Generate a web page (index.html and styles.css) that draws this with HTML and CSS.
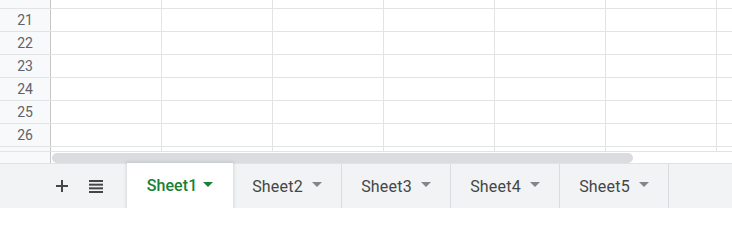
FILE: index.html
```html
<!DOCTYPE html>
<html>
<head>
<meta charset="utf-8">
<link rel="stylesheet" href="styles.css">
</head>
<body>
<div class="sheet">
  <div class="grid">
    <div class="row row-top"><div class="rh"></div><div class="c"></div><div class="c"></div><div class="c"></div><div class="c"></div><div class="c"></div><div class="c"></div><div class="c"></div></div>
    <div class="row"><div class="rh">21</div><div class="c"></div><div class="c"></div><div class="c"></div><div class="c"></div><div class="c"></div><div class="c"></div><div class="c"></div></div>
    <div class="row"><div class="rh">22</div><div class="c"></div><div class="c"></div><div class="c"></div><div class="c"></div><div class="c"></div><div class="c"></div><div class="c"></div></div>
    <div class="row"><div class="rh">23</div><div class="c"></div><div class="c"></div><div class="c"></div><div class="c"></div><div class="c"></div><div class="c"></div><div class="c"></div></div>
    <div class="row"><div class="rh">24</div><div class="c"></div><div class="c"></div><div class="c"></div><div class="c"></div><div class="c"></div><div class="c"></div><div class="c"></div></div>
    <div class="row"><div class="rh">25</div><div class="c"></div><div class="c"></div><div class="c"></div><div class="c"></div><div class="c"></div><div class="c"></div><div class="c"></div></div>
    <div class="row"><div class="rh">26</div><div class="c"></div><div class="c"></div><div class="c"></div><div class="c"></div><div class="c"></div><div class="c"></div><div class="c"></div></div>
    <div class="row row-bottom"><div class="rh"></div><div class="c"></div><div class="c"></div><div class="c"></div><div class="c"></div><div class="c"></div><div class="c"></div><div class="c"></div></div>
  </div>
  <div class="scroll">
    <div class="scroll-corner"></div>
    <div class="scroll-track"><div class="thumb"></div></div>
  </div>
  <div class="tabbar">
    <div class="tools">
      <div class="btn" title="Add sheet">
        <svg width="12" height="12" viewBox="0 0 12 12"><path d="M6 0v12M0 6h12" stroke="#444746" stroke-width="2" fill="none"/></svg>
      </div>
      <div class="btn" title="All sheets">
        <svg width="14" height="13" viewBox="0 0 14 13"><rect x="0" y="0" width="14" height="2" fill="#444746"/><rect x="0" y="3.67" width="14" height="2" fill="#444746"/><rect x="0" y="7.33" width="14" height="2" fill="#444746"/><rect x="0" y="11" width="14" height="2" fill="#444746"/></svg>
      </div>
    </div>
    <div class="tab active"><span class="label">Sheet1</span><span class="caret"></span></div>
    <div class="tab"><span class="label">Sheet2</span><span class="caret"></span></div>
    <div class="tab"><span class="label">Sheet3</span><span class="caret"></span></div>
    <div class="tab"><span class="label">Sheet4</span><span class="caret"></span></div>
    <div class="tab"><span class="label">Sheet5</span><span class="caret"></span></div>
  </div>
</div>
</body>
</html>
```

FILE: styles.css
```css
* { box-sizing: border-box; }
html, body { margin: 0; padding: 0; background: #fff; }
body { width: 732px; height: 208px; overflow: hidden; font-family: Roboto, "Noto Sans", Arial, sans-serif; }

.sheet { width: 732px; height: 208px; display: flex; flex-direction: column; overflow: hidden; }

.grid { display: flex; flex-direction: column; }
.row { display: flex; height: 23px; border-bottom: 1px solid #e2e3e3; flex: none; overflow: hidden; }
.row-top { height: 9px; }
.row-bottom { height: 5px; }
.rh {
  flex: none; width: 51px; background: #f8f9fa; border-right: 1px solid #c4c7c5;
  font-size: 14px; color: #5f6368; display: flex; align-items: center; justify-content: center;
}
.c { flex: none; width: 111px; border-right: 1px solid #e2e3e3; }

.scroll { display: flex; height: 11px; flex: none; }
.scroll-corner { width: 51px; background: #f8f9fa; border-right: 1px solid #c4c7c5; flex: none; }
.scroll-track { flex: 1; padding: 1px 0 0 1px; }
.thumb { width: 581px; height: 10px; border-radius: 5px; background: #dadce0; }

.tabbar { flex: 1; display: flex; background: #f1f3f4; border-top: 1px solid #e1e3e1; }
.tools { width: 127px; flex: none; display: flex; align-items: center; padding-left: 50px; gap: 10px; }
.btn { width: 24px; height: 24px; display: flex; align-items: center; justify-content: center; }

.tab {
  flex: none; width: 109px; border-right: 1px solid #dadce0;
  display: flex; align-items: center; justify-content: center; gap: 9px;
  font-size: 16px; letter-spacing: 0.2px; color: #444746;
}
.tab.active {
  width: 106px; background: #fff; border-right: none; color: #188038; font-weight: 500;
  gap: 6px; letter-spacing: 0.1px;
  box-shadow: 0 0 3px 1px rgba(60, 64, 67, 0.15);
  position: relative; margin-top: -1px;
}
.caret {
  width: 0; height: 0; border-left: 5px solid transparent; border-right: 5px solid transparent;
  border-top: 5px solid #80868b; margin-top: -3px;
}
.tab.active .caret { border-top-color: #188038; }
```
